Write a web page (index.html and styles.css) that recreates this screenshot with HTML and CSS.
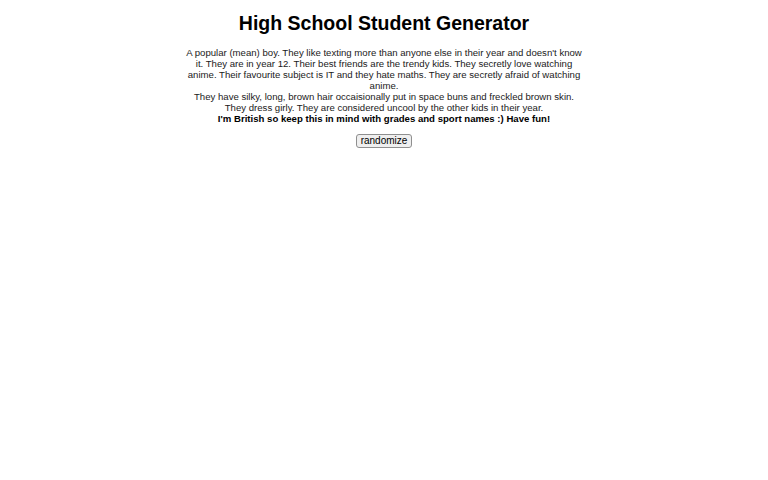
FILE: index.html
```html
<!DOCTYPE html>
<html lang="en">
<head>
    <meta charset="UTF-8">
    <meta name="viewport" content="width=device-width, initial-scale=1.0">
    <title>High School Student Generator</title>
    <link rel="stylesheet" href="styles.css">
</head>
<body>
    <h1>High School Student Generator</h1>

    <div id="student">
        <p id="personality">A popular (mean) boy. They like texting more than anyone else in their year and doesn't know it. They are in year 12. Their best friends are the trendy kids. They secretly love watching anime. Their favourite subject is IT and they hate maths. They are secretly afraid of watching anime.</p>
        <p id="looks">They have silky, long, brown hair occaisionally put in space buns and freckled brown skin. They dress girly. They are considered uncool by the other kids in their year.</p>
        <p class="note">I'm British so keep this in mind with grades and sport names :) Have fun!</p>
    </div>

    <div class="button-container">
        <button id="randomize">randomize</button>
    </div>
</body>
</html>
```

FILE: styles.css
```css
body {
    font-family: 'Liberation Sans', Arial, sans-serif;
    margin: 0;
    padding: 8px;
    text-align: center;
    color: #000;
    background-color: #fff;
}
h1 {
    font-size: 19.5px;
    line-height: 22px;
    margin: 4px 0 13px;
}
#student {
    max-width: 400px;
    margin: 0 auto;
    font-size: 9.6px;
    line-height: 11px;
    color: #1a1a1a;
}
#student p {
    margin: 0;
}
.note {
    font-weight: bold;
    color: #000;
}
.button-container {
    margin: 6px 0;
}
button {
    font-family: 'Liberation Sans', Arial, sans-serif;
    font-size: 10px;
    line-height: 12px;
    padding: 0 4px;
    background-color: #efefef;
    border: 1px solid #8f8f8f;
    border-radius: 3px;
    color: #000;
}
```
